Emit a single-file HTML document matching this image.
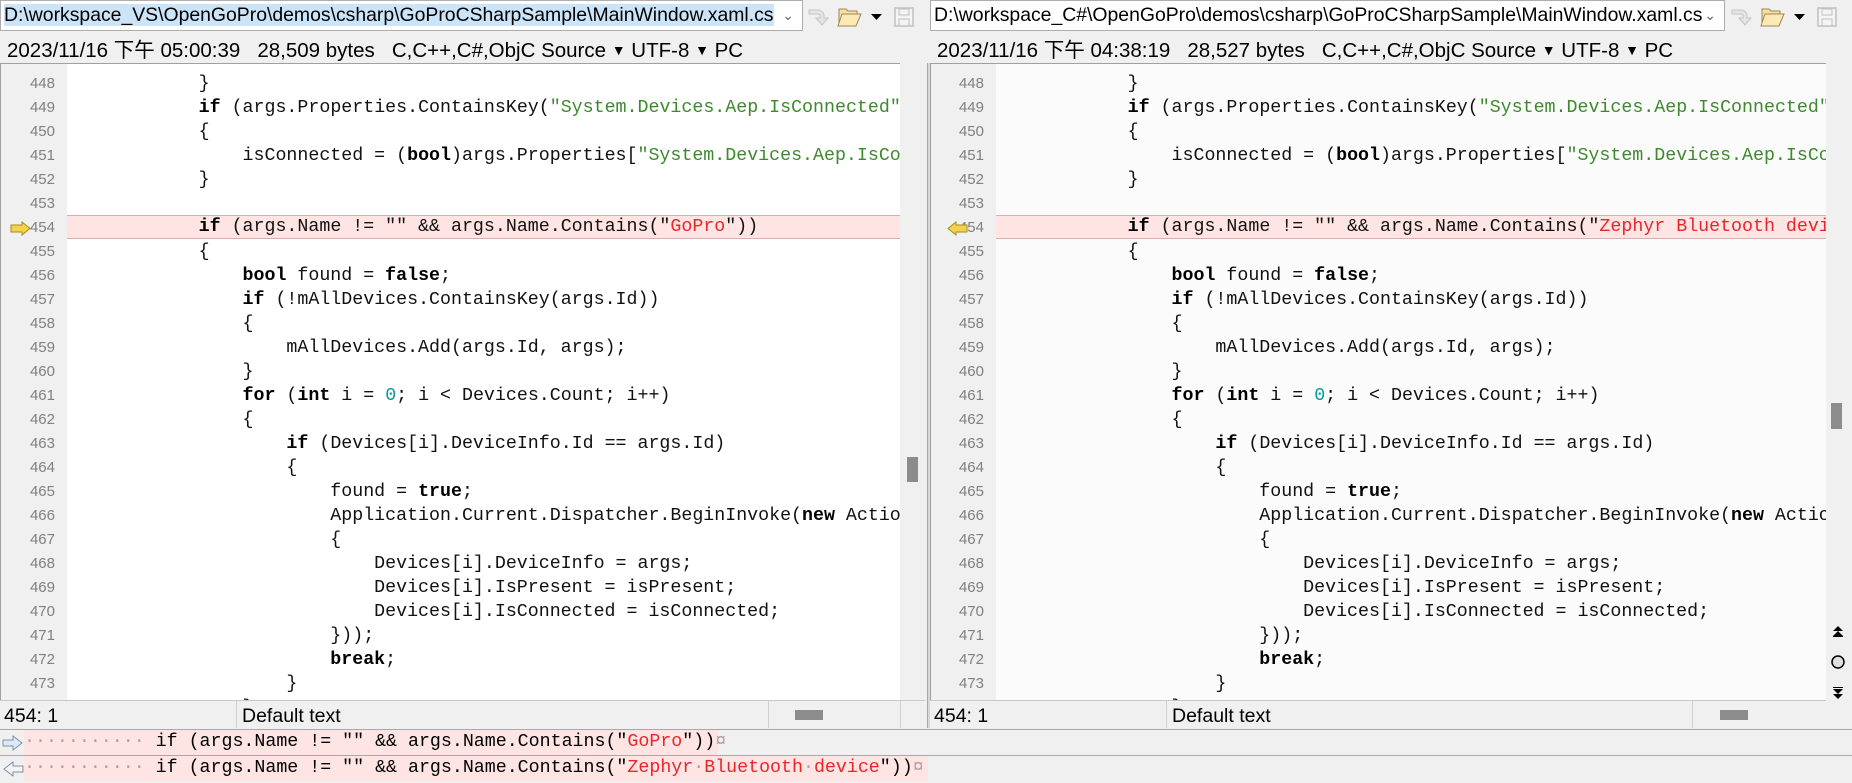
<!DOCTYPE html>
<html style="width:1852px;height:783px;overflow:hidden"><head><meta charset="utf-8">
<style>
*{margin:0;padding:0;box-sizing:border-box}
body{width:1852px;height:783px;overflow:hidden;background:#f0f0f0;font-family:"Liberation Sans","Noto Sans CJK TC",sans-serif;position:relative;color:#000}
.abs{position:absolute}
.path{top:0;height:31px;background:#fff;border:1px solid #adadad;font-size:19.4px;line-height:29px;padding-left:3px;white-space:nowrap;overflow:hidden}
.path .sel{background:#cce4f7}
.chev{position:absolute;right:8px;top:0;color:#666;font-size:14px}
.info{top:35px;height:30px;font-size:20.5px;line-height:30px;white-space:pre;color:#000}
.tri{font-size:14px;vertical-align:2px}
.gut{top:63px;height:637px;background:#f0f0f0;overflow:hidden}
.code{top:63px;height:637px;overflow:hidden;border-top:1px solid #a0a0a0}
.ln{position:absolute;right:12px;font-size:15px;color:#808080;line-height:24px;height:24px;text-align:right}
.cl{position:absolute;left:0;right:0;height:24px;line-height:24px;font-family:"Liberation Mono",monospace;font-size:18.3px;white-space:pre;color:#111;padding-left:0}
.diff{background:#ffe4e4;border-top:1px solid #d8b0b0;border-bottom:1px solid #d8b0b0}
b{font-weight:bold;color:#000}
.s{color:#3d8a2d}.n{color:#0a9a9a}.r{color:#e8262a}
.sb{top:63px;height:637px;background:#f0f0f0}
.thumb{background:#8c8c8c}
.status{top:700px;height:28px;background:#f0f0f0;border-top:1px solid #c8c8c8;font-size:19.5px;line-height:30px}
.bl{left:0;width:1852px;height:26px;border-top:1px solid #a8a8a8;font-family:"Liberation Mono",monospace;font-size:18.3px;white-space:pre;line-height:25px}
.dot{color:#b0a0a0}
</style></head><body>

<div class="abs path" style="left:0;width:803px"><span class="sel">D:\workspace_VS\OpenGoPro\demos\csharp\GoProCSharpSample\MainWindow.xaml.cs</span><span class="chev">&#8964;</span></div>
<svg class="abs" style="left:806px;top:4px" width="112" height="24" viewBox="0 0 112 24">
 <path d="M3 6h9a6 6 0 0 1 6 6v2h4l-6 7-6-7h4v-2a2 2 0 0 0-2-2H3z" fill="#e4e4e4" stroke="#c4c4c4"/>
 <path d="M33 5h7l2 2h9v3H38l-5 12z" fill="#f6dfa4" stroke="#a08850"/>
 <path d="M36 10h19l-5 12H32z" fill="#fde9b6" stroke="#a08850"/>
 <path d="M65 10h11l-5.5 6z" fill="#000"/>
 <rect x="89" y="4" width="18" height="18" fill="#f4f4f4" stroke="#c0c0c0" stroke-width="1.5"/>
 <rect x="93" y="5" width="10" height="6" fill="none" stroke="#c0c0c0"/>
 <rect x="93" y="15" width="10" height="7" fill="none" stroke="#c0c0c0"/>
</svg>
<div class="abs info" style="left:7px">2023/11/16 下午 05:00:39   28,509 bytes   C,C++,C#,ObjC Source <span class="tri">▼</span> UTF-8 <span class="tri">▼</span> PC</div>

<div class="abs path" style="left:930px;width:795px">D:\workspace_C#\OpenGoPro\demos\csharp\GoProCSharpSample\MainWindow.xaml.cs<span class="chev">&#8964;</span></div>
<svg class="abs" style="left:1729px;top:4px" width="112" height="24" viewBox="0 0 112 24">
 <path d="M3 6h9a6 6 0 0 1 6 6v2h4l-6 7-6-7h4v-2a2 2 0 0 0-2-2H3z" fill="#e4e4e4" stroke="#c4c4c4"/>
 <path d="M33 5h7l2 2h9v3H38l-5 12z" fill="#f6dfa4" stroke="#a08850"/>
 <path d="M36 10h19l-5 12H32z" fill="#fde9b6" stroke="#a08850"/>
 <path d="M65 10h11l-5.5 6z" fill="#000"/>
 <rect x="89" y="4" width="18" height="18" fill="#f4f4f4" stroke="#c0c0c0" stroke-width="1.5"/>
 <rect x="93" y="5" width="10" height="6" fill="none" stroke="#c0c0c0"/>
 <rect x="93" y="15" width="10" height="7" fill="none" stroke="#c0c0c0"/>
</svg>
<div class="abs info" style="left:937px">2023/11/16 下午 04:38:19   28,527 bytes   C,C++,C#,ObjC Source <span class="tri">▼</span> UTF-8 <span class="tri">▼</span> PC</div>

<div class="abs gut" style="left:0;width:67px;border-top:1px solid #a0a0a0;border-left:1px solid #a0a0a0">
 <div class="ln" style="top:8px">448</div><div class="ln" style="top:32px">449</div><div class="ln" style="top:56px">450</div><div class="ln" style="top:80px">451</div><div class="ln" style="top:104px">452</div><div class="ln" style="top:128px">453</div><div class="ln" style="top:152px">454</div><div class="ln" style="top:176px">455</div><div class="ln" style="top:200px">456</div><div class="ln" style="top:224px">457</div><div class="ln" style="top:248px">458</div><div class="ln" style="top:272px">459</div><div class="ln" style="top:296px">460</div><div class="ln" style="top:320px">461</div><div class="ln" style="top:344px">462</div><div class="ln" style="top:368px">463</div><div class="ln" style="top:392px">464</div><div class="ln" style="top:416px">465</div><div class="ln" style="top:440px">466</div><div class="ln" style="top:464px">467</div><div class="ln" style="top:488px">468</div><div class="ln" style="top:512px">469</div><div class="ln" style="top:536px">470</div><div class="ln" style="top:560px">471</div><div class="ln" style="top:584px">472</div><div class="ln" style="top:608px">473</div><div class="ln" style="top:632px">474</div>
 <svg style="position:absolute;left:9px;top:157px" width="22" height="15" viewBox="0 0 22 15"><path d="M1 4h11V1l8 6.5-8 6.5v-3H1z" fill="#f3d34a" stroke="#a88a20"/></svg>
</div>
<div class="abs code" style="left:67px;width:833px;background:#fff">
<div class="cl" style="top:8px">            }</div>
<div class="cl" style="top:32px">            <b>if</b> (args.Properties.ContainsKey(<span class="s">"System.Devices.Aep.IsConnected"</span>))</div>
<div class="cl" style="top:56px">            {</div>
<div class="cl" style="top:80px">                isConnected = (<b>bool</b>)args.Properties[<span class="s">"System.Devices.Aep.IsConnected"</span>];</div>
<div class="cl" style="top:104px">            }</div>
<div class="cl diff" style="top:151px;line-height:22px">            <b>if</b> (args.Name != "" &amp;&amp; args.Name.Contains("<span class="r">GoPro</span>"))</div>
<div class="cl" style="top:176px">            {</div>
<div class="cl" style="top:200px">                <b>bool</b> found = <b>false</b>;</div>
<div class="cl" style="top:224px">                <b>if</b> (!mAllDevices.ContainsKey(args.Id))</div>
<div class="cl" style="top:248px">                {</div>
<div class="cl" style="top:272px">                    mAllDevices.Add(args.Id, args);</div>
<div class="cl" style="top:296px">                }</div>
<div class="cl" style="top:320px">                <b>for</b> (<b>int</b> i = <span class="n">0</span>; i &lt; Devices.Count; i++)</div>
<div class="cl" style="top:344px">                {</div>
<div class="cl" style="top:368px">                    <b>if</b> (Devices[i].DeviceInfo.Id == args.Id)</div>
<div class="cl" style="top:392px">                    {</div>
<div class="cl" style="top:416px">                        found = <b>true</b>;</div>
<div class="cl" style="top:440px">                        Application.Current.Dispatcher.BeginInvoke(<b>new</b> Action(() =&gt;</div>
<div class="cl" style="top:464px">                        {</div>
<div class="cl" style="top:488px">                            Devices[i].DeviceInfo = args;</div>
<div class="cl" style="top:512px">                            Devices[i].IsPresent = isPresent;</div>
<div class="cl" style="top:536px">                            Devices[i].IsConnected = isConnected;</div>
<div class="cl" style="top:560px">                        }));</div>
<div class="cl" style="top:584px">                        <b>break</b>;</div>
<div class="cl" style="top:608px">                    }</div>
<div class="cl" style="top:632px">                }</div>
</div>
<div class="abs sb" style="left:900px;width:25px"><div class="abs thumb" style="left:7px;top:394px;width:11px;height:25px"></div></div>
<div class="abs" style="left:927px;top:63px;width:3px;height:665px;background:#d8d8d8;border-left:1px solid #a8a8a8"></div>

<div class="abs gut" style="left:930px;width:66px;border-top:1px solid #a0a0a0;border-left:1px solid #a0a0a0">
 <div class="ln" style="top:8px">448</div><div class="ln" style="top:32px">449</div><div class="ln" style="top:56px">450</div><div class="ln" style="top:80px">451</div><div class="ln" style="top:104px">452</div><div class="ln" style="top:128px">453</div><div class="ln" style="top:152px">454</div><div class="ln" style="top:176px">455</div><div class="ln" style="top:200px">456</div><div class="ln" style="top:224px">457</div><div class="ln" style="top:248px">458</div><div class="ln" style="top:272px">459</div><div class="ln" style="top:296px">460</div><div class="ln" style="top:320px">461</div><div class="ln" style="top:344px">462</div><div class="ln" style="top:368px">463</div><div class="ln" style="top:392px">464</div><div class="ln" style="top:416px">465</div><div class="ln" style="top:440px">466</div><div class="ln" style="top:464px">467</div><div class="ln" style="top:488px">468</div><div class="ln" style="top:512px">469</div><div class="ln" style="top:536px">470</div><div class="ln" style="top:560px">471</div><div class="ln" style="top:584px">472</div><div class="ln" style="top:608px">473</div><div class="ln" style="top:632px">474</div>
 <svg style="position:absolute;left:15px;top:157px" width="22" height="15" viewBox="0 0 22 15"><path d="M21 4H10V1L2 7.5l8 6.5v-3h11z" fill="#f3d34a" stroke="#a88a20"/></svg>
</div>
<div class="abs code" style="left:996px;width:830px;background:#fbfbfb">
<div class="cl" style="top:8px">            }</div>
<div class="cl" style="top:32px">            <b>if</b> (args.Properties.ContainsKey(<span class="s">"System.Devices.Aep.IsConnected"</span>))</div>
<div class="cl" style="top:56px">            {</div>
<div class="cl" style="top:80px">                isConnected = (<b>bool</b>)args.Properties[<span class="s">"System.Devices.Aep.IsConnected"</span>];</div>
<div class="cl" style="top:104px">            }</div>
<div class="cl diff" style="top:151px;line-height:22px">            <b>if</b> (args.Name != "" &amp;&amp; args.Name.Contains("<span class="r">Zephyr Bluetooth device</span>"))</div>
<div class="cl" style="top:176px">            {</div>
<div class="cl" style="top:200px">                <b>bool</b> found = <b>false</b>;</div>
<div class="cl" style="top:224px">                <b>if</b> (!mAllDevices.ContainsKey(args.Id))</div>
<div class="cl" style="top:248px">                {</div>
<div class="cl" style="top:272px">                    mAllDevices.Add(args.Id, args);</div>
<div class="cl" style="top:296px">                }</div>
<div class="cl" style="top:320px">                <b>for</b> (<b>int</b> i = <span class="n">0</span>; i &lt; Devices.Count; i++)</div>
<div class="cl" style="top:344px">                {</div>
<div class="cl" style="top:368px">                    <b>if</b> (Devices[i].DeviceInfo.Id == args.Id)</div>
<div class="cl" style="top:392px">                    {</div>
<div class="cl" style="top:416px">                        found = <b>true</b>;</div>
<div class="cl" style="top:440px">                        Application.Current.Dispatcher.BeginInvoke(<b>new</b> Action(() =&gt;</div>
<div class="cl" style="top:464px">                        {</div>
<div class="cl" style="top:488px">                            Devices[i].DeviceInfo = args;</div>
<div class="cl" style="top:512px">                            Devices[i].IsPresent = isPresent;</div>
<div class="cl" style="top:536px">                            Devices[i].IsConnected = isConnected;</div>
<div class="cl" style="top:560px">                        }));</div>
<div class="cl" style="top:584px">                        <b>break</b>;</div>
<div class="cl" style="top:608px">                    }</div>
<div class="cl" style="top:632px">                }</div>
</div>
<div class="abs sb" style="left:1826px;width:26px"><div class="abs thumb" style="left:5px;top:340px;width:11px;height:26px"></div>
 <svg class="abs" style="left:3px;top:560px" width="18" height="80" viewBox="0 0 18 80">
  <path d="M4 8l5-5 5 5zM4 13l5-5 5 5zM4 13h10v1H4z" fill="#000"/>
  <circle cx="9" cy="39" r="6" fill="#e0e0e0" stroke="#000" stroke-width="1.5"/>
  <path d="M4 64h10v1H4zM4 66l5 5 5-5zM4 71l5 5 5-5z" fill="#000"/>
 </svg>
</div>

<div class="abs status" style="left:0;width:925px">
 <span class="abs" style="left:4px">454: 1</span>
 <div class="abs" style="left:236px;top:0;width:1px;height:27px;background:#d0d0d0"></div>
 <span class="abs" style="left:242px">Default text</span>
 <div class="abs" style="left:768px;top:0;width:1px;height:27px;background:#d0d0d0"></div>
 <div class="abs thumb" style="left:795px;top:9px;width:28px;height:10px"></div>
 <div class="abs" style="left:900px;top:0;width:1px;height:27px;background:#d0d0d0"></div>
</div>
<div class="abs status" style="left:930px;width:896px">
 <span class="abs" style="left:4px">454: 1</span>
 <div class="abs" style="left:236px;top:0;width:1px;height:27px;background:#d0d0d0"></div>
 <span class="abs" style="left:242px">Default text</span>
 <div class="abs" style="left:762px;top:0;width:1px;height:27px;background:#d0d0d0"></div>
 <div class="abs thumb" style="left:790px;top:9px;width:28px;height:10px"></div>
</div>

<div class="abs bl" style="top:729px;background:#f0f0f0">
 <svg class="abs" style="left:2px;top:5px" width="22" height="16" viewBox="0 0 22 16"><path d="M1 5h10V1l9 7-9 7v-4H1z" fill="#dce8f6" stroke="#8090a8"/></svg>
 <div class="abs" style="left:24px;top:0;width:694px;height:25px;background:#ffe4e4;padding-left:0"><span class="dot">···········</span> if (args.Name != "" &amp;&amp; args.Name.Contains("<span class="r">GoPro</span>"))<span class="dot">¤</span></div>
</div>
<div class="abs bl" style="top:755px;height:28px;background:#f0f0f0">
 <svg class="abs" style="left:2px;top:5px" width="22" height="16" viewBox="0 0 22 16"><path d="M21 5H11V1L2 8l9 7v-4h10z" fill="#f4f4f4" stroke="#8090a8"/></svg>
 <div class="abs" style="left:24px;top:0;width:904px;height:25px;background:#ffe4e4;padding-left:0"><span class="dot">···········</span> if (args.Name != "" &amp;&amp; args.Name.Contains("<span class="r">Zephyr<span class="dot">·</span>Bluetooth<span class="dot">·</span>device</span>"))<span class="dot">¤</span></div>
</div>
</body></html>
